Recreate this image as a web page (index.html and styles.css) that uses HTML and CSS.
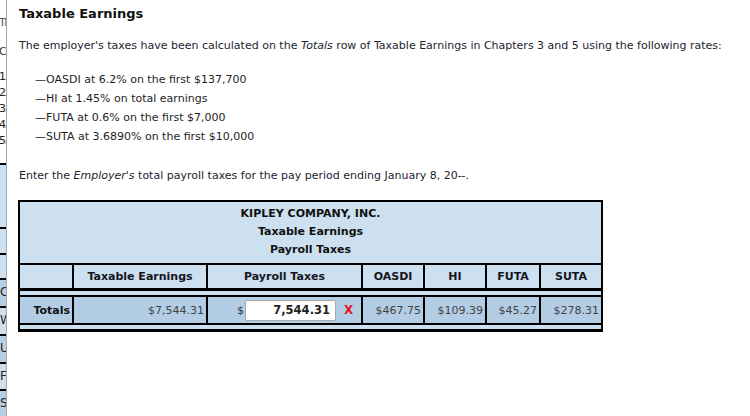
FILE: index.html
```html
<!DOCTYPE html>
<html>
<head>
<meta charset="utf-8">
<link rel="stylesheet" href="styles.css">
</head>
<body>
<div class="page">
  <aside class="side">
    <div class="side-inner">
      <div class="side-t1">Th</div>
      <div class="side-t2">Co</div>
      <ol class="side-list">
        <li>1.</li><li>2.</li><li>3.</li><li>4.</li><li>5.</li>
      </ol>
      <div class="side-table">
        <div class="srow s-tall"></div>
        <div class="srow s-r1"></div>
        <div class="srow s-r2"></div>
        <div class="srow s-r3 s-b">C</div>
        <div class="srow s-r4 s-a">W</div>
        <div class="srow s-r5 s-b">U</div>
        <div class="srow s-r6 s-a">F</div>
        <div class="srow s-r7 s-b">S</div>
      </div>
    </div>
  </aside>
  <main class="main">
    <h1 class="title">Taxable Earnings</h1>
    <p class="para">The employer's taxes have been calculated on the <em>Totals</em> row of Taxable Earnings in Chapters 3 and 5 using the following rates:</p>
    <ul class="rates">
      <li>—OASDI at 6.2% on the first $137,700</li>
      <li>—HI at 1.45% on total earnings</li>
      <li>—FUTA at 0.6% on the first $7,000</li>
      <li>—SUTA at 3.6890% on the first $10,000</li>
    </ul>
    <p class="para enter">Enter the <em>Employer's</em> total payroll taxes for the pay period ending January 8, 20--.</p>
    <div class="sheet">
      <div class="sheet-head">
        <div>KIPLEY COMPANY, INC.</div>
        <div>Taxable Earnings</div>
        <div>Payroll Taxes</div>
      </div>
      <div class="grid hdr">
        <div class="cell"></div>
        <div class="cell">Taxable Earnings</div>
        <div class="cell">Payroll Taxes</div>
        <div class="cell">OASDI</div>
        <div class="cell">HI</div>
        <div class="cell">FUTA</div>
        <div class="cell">SUTA</div>
      </div>
      <div class="strip"></div>
      <div class="grid tot">
        <div class="cell lbl">Totals</div>
        <div class="cell num">$7,544.31</div>
        <div class="cell entry">
          <span class="cur">$</span>
          <span class="input">7,544.31</span>
          <span class="wrong">X</span>
        </div>
        <div class="cell num">$467.75</div>
        <div class="cell num">$109.39</div>
        <div class="cell num">$45.27</div>
        <div class="cell num">$278.31</div>
      </div>
      <div class="strip"></div>
    </div>
  </main>
</div>
</body>
</html>
```
FILE: styles.css
```css
* { box-sizing: border-box; }
html, body { margin: 0; padding: 0; background: #fff; }
body {
  font-family: "DejaVu Sans", Tahoma, sans-serif;
  font-size: 11px;
  color: #1e1e1e;
  width: 750px;
  height: 416px;
  overflow: hidden;
}
.page { display: flex; height: 416px; }

/* clipped left panel */
.side {
  width: 7px;
  flex: none;
  overflow: hidden;
  border-right: 1px solid #a8a8a8;
  height: 416px;
}
.side-inner { width: 120px; margin-left: -1px; font-size: 11px; letter-spacing: -1.5px; }
.side-t1 { padding-top: 15px; line-height: 16px; color: #4a5a70; }
.side-t2 { margin-top: 13px; line-height: 16px; color: #333; }
.side-list { list-style: none; margin: 9px 0 0; padding: 0; }
.side-list li { line-height: 16px; color: #222; }
.side-table { margin-top: 14px; }
.srow {
  border-top: 2px solid #000;
  background: #cce0f0;
  height: 26px;
  line-height: 25px;
  font-size: 12px;
  padding-left: 1px;
  color: #222;
}
.s-tall { height: 64px; }
.s-r1 { height: 26px; }
.s-r2 { height: 25px; }
.s-r3 { height: 28px; }
.s-r4 { height: 28px; }
.s-r5 { height: 28px; }
.s-r6 { height: 27px; }
.s-r7 { height: 30px; }
.s-a { background: #cce0f0; }
.s-b { background: #b4cfe6; }

/* main */
.main { flex: 1; padding-left: 11px; }
.title {
  margin: 6px 0 0 1px;
  font-size: 13px;
  line-height: 16px;
  font-weight: bold;
  color: #111;
}
.para { margin: 16px 0 0 1px; line-height: 16px; color: #23232f; }
.para em { font-style: italic; }
.rates { list-style: none; margin: 16px 0 0; padding-left: 17px; }
.rates li { line-height: 19px; color: #1e1e1e; }
.enter { margin-top: 22px; }

/* table */
.sheet {
  margin-top: 16px;
  width: 585px;
  border: 2px solid #000;
  border-bottom-width: 3px;
  background: #cce0f0;
}
.sheet-head {
  padding: 3px 0 4px;
  text-align: center;
  font-weight: bold;
  line-height: 18px;
  color: #111;
}
.grid {
  display: grid;
  grid-template-columns: 52px 132px 153px 60px 60px 52px 60px;
  column-gap: 2px;
  background: #000;
  border-top: 2px solid #000;
}
.hdr { border-bottom: 3px solid #000; }
.hdr .cell {
  background: #cce0f0;
  height: 23px;
  display: flex;
  align-items: center;
  justify-content: center;
  font-weight: bold;
  color: #151520;
}
.strip { height: 4px; background: #cce0f0; }
.tot { border-bottom: 2px solid #000; }
.tot .cell {
  background: #b2cde4;
  height: 26px;
  display: flex;
  align-items: center;
  justify-content: flex-end;
  padding-right: 2px;
  color: #444;
}
.tot .lbl { font-weight: bold; color: #111; }
.tot .entry { padding-right: 8px; }
.cur { color: #333; margin-right: 1px; }
.input {
  width: 91px;
  height: 21px;
  background: #fff;
  border: 1px solid #a9a9a9;
  border-radius: 2px;
  text-align: right;
  padding-right: 5px;
  line-height: 19px;
  font-weight: bold;
  color: #222;
  font-size: 11.5px;
}
.wrong {
  margin-left: 8px;
  color: #e8141e;
  font-weight: bold;
  font-size: 12px;
  width: 9px;
}
```
